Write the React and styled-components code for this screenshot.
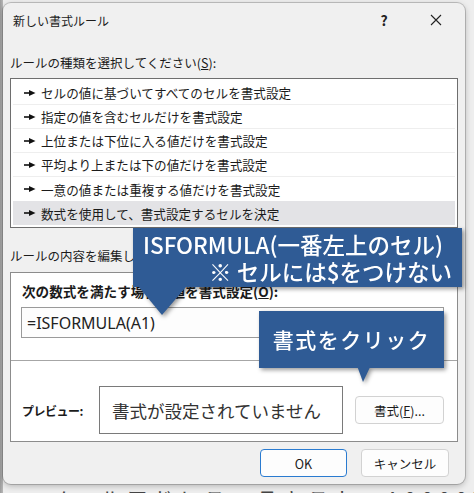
import React from "react";
import styled, { createGlobalStyle } from "styled-components";

const Global = createGlobalStyle`
  html, body { margin: 0; padding: 0; }
  body {
    background: #e4e4e4;
    font-family: "Noto Sans CJK JP", "Noto Sans", sans-serif;
    color: #1b1b1b;
  }
`;

const Page = styled.div`
  position: relative;
  width: 474px;
  height: 493px;
  overflow: hidden;
  padding: 3px 0 0 3px;
  box-sizing: border-box;
  background: linear-gradient(90deg, #9c9c9c 0, #b8b8b8 3px, #eeeeee 3px);
`;

const Dialog = styled.div`
  width: 462px;
  height: 481px;
  box-sizing: border-box;
  background: #f0f0f0;
  border-radius: 8px;
  box-shadow: 0 0 0 1px rgba(0, 0, 0, 0.18), 0 2px 6px rgba(0, 0, 0, 0.25);
  display: flex;
  flex-direction: column;
  padding: 0 7px 7px;
`;

const TitleBar = styled.div`
  height: 34px;
  display: flex;
  align-items: center;
  padding-left: 3px;
  padding-right: 15px;
  font-size: 12px;
`;

const TitleText = styled.span`
  flex: 1;
`;

const TitleButton = styled.span`
  width: 14px;
  margin-left: ${(p) => p.$ml || 0}px;
  display: flex;
  justify-content: center;
  align-items: center;
  font-size: 14px;
  font-weight: 600;
  color: #222;
`;

const Label = styled.div`
  height: 18px;
  line-height: 18px;
  font-size: ${(p) => (p.$bold ? 13.6 : 12.5)}px;
  margin-top: ${(p) => p.$mt || 0}px;
  padding-left: ${(p) => p.$pl || 0}px;
  font-weight: ${(p) => (p.$bold ? 700 : 400)};
  white-space: nowrap;
`;

const ListBox = styled.div`
  margin-top: 6px;
  height: 150px;
  box-sizing: border-box;
  border: 1px solid #6e6e6e;
  background: #ffffff;
  padding: 2px;
  display: flex;
  flex-direction: column;
`;

const Row = styled.div`
  height: 24px;
  flex: none;
  box-sizing: border-box;
  display: flex;
  align-items: center;
  gap: 5px;
  padding-left: 11px;
  font-size: 12.6px;
  background: ${(p) => (p.$selected ? "#e3e3e6" : "transparent")};
  border-bottom: ${(p) => (p.$last ? "none" : "1px solid #eeeeee")};
  white-space: nowrap;
`;

const GroupBox = styled.div`
  margin-top: 7px;
  border: 1px solid #8c8c8c;
  background: #ffffff;
  display: flex;
  flex-direction: column;
`;

const FormulaSection = styled.div`
  padding: 9px 13px 22px 10px;
  border-bottom: 1px solid #a6a6a6;
  display: flex;
  flex-direction: column;
`;

const FormulaInput = styled.div`
  margin-top: 7px;
  height: 31px;
  box-sizing: border-box;
  border: 1px solid #9a9a9a;
  background: #fdfdfd;
  display: flex;
  align-items: center;
  padding-left: 5px;
  font-family: "Noto Sans", "Noto Sans CJK JP", sans-serif;
  font-size: 16px;
  color: #222;
`;

const PreviewSection = styled.div`
  padding: 25px 13px 7px 11px;
  display: flex;
  align-items: center;
`;

const PreviewLabel = styled.div`
  width: 77px;
  font-size: 12px;
  font-weight: 700;
  letter-spacing: -0.5px;
`;

const PreviewBox = styled.div`
  width: 244px;
  height: 48px;
  box-sizing: border-box;
  border: 1px solid #7a7a7a;
  display: flex;
  align-items: center;
  padding-left: 12px;
  font-size: 17.5px;
  color: #333;
  white-space: nowrap;
`;

const Button = styled.button`
  width: ${(p) => p.$w}px;
  height: 28px;
  margin-left: ${(p) => p.$ml}px;
  box-sizing: border-box;
  border-radius: 4px;
  border: ${(p) => (p.$primary ? "1.5px solid #2a7bd0" : "1px solid #d2d2d2")};
  background: #fdfdfd;
  font-family: "Noto Sans CJK JP", "Noto Sans", sans-serif;
  font-size: 12.5px;
  color: #1b1b1b;
  padding: 0;
  display: flex;
  align-items: center;
  justify-content: center;
`;

const Footer = styled.div`
  margin-top: 7px;
  display: flex;
  justify-content: flex-end;
  padding-right: 9px;
`;

const BackdropText = styled.div`
  margin-top: 5px;
  padding-left: 46px;
  font-size: 20px;
  line-height: 20px;
  color: #444;
  letter-spacing: 6px;
  white-space: nowrap;
`;

const Callout = styled.div`
  position: absolute;
  left: ${(p) => p.$x}px;
  top: ${(p) => p.$y}px;
  width: ${(p) => p.$w}px;
  height: ${(p) => p.$h}px;
  filter: drop-shadow(2px 2px 2px rgba(0, 0, 0, 0.4));
`;

const CalloutBox = styled.div`
  position: relative;
  z-index: 1;
  height: 100%;
  box-sizing: border-box;
  background: #2f5b95;
  color: #ffffff;
  font-family: "Noto Sans CJK JP", sans-serif;
  font-weight: 500;
  font-size: ${(p) => p.$fs || 21}px;
  line-height: 27px;
  display: flex;
  flex-direction: column;
  justify-content: ${(p) => p.$justify || "flex-start"};
  align-items: ${(p) => p.$align || "stretch"};
  padding: ${(p) => p.$pad};
  letter-spacing: ${(p) => p.$ls || 0}px;
  white-space: nowrap;
`;

const CalloutLine = styled.div`
  text-align: ${(p) => p.$align};
`;

const Tail = styled.svg`
  position: absolute;
  left: ${(p) => p.$x}px;
  top: ${(p) => p.$y}px;
  overflow: visible;
`;

const Arrow = () => (
  <svg width="12" height="8" viewBox="0 0 12 8">
    <rect x="0" y="3.2" width="6" height="1.6" fill="#111" />
    <polygon points="5,1 11.5,4 5,7" fill="#111" />
  </svg>
);

const CloseIcon = () => (
  <svg width="12" height="12" viewBox="0 0 12 12">
    <path d="M1 1 L11 11 M11 1 L1 11" stroke="#222" strokeWidth="1.1" fill="none" />
  </svg>
);

const rules = [
  "セルの値に基づいてすべてのセルを書式設定",
  "指定の値を含むセルだけを書式設定",
  "上位または下位に入る値だけを書式設定",
  "平均より上または下の値だけを書式設定",
  "一意の値または重複する値だけを書式設定",
  "数式を使用して、書式設定するセルを決定",
];

export default function App() {
  return (
    <>
      <Global />
      <Page>
        <Dialog>
          <TitleBar>
            <TitleText>新しい書式ルール</TitleText>
            <TitleButton>?</TitleButton>
            <TitleButton $ml={38}>
              <CloseIcon />
            </TitleButton>
          </TitleBar>
          <Label $mt={17}>
            ルールの種類を選択してください(<u>S</u>):
          </Label>
          <ListBox>
            {rules.map((r, i) => (
              <Row key={r} $selected={i === rules.length - 1} $last={i >= rules.length - 2}>
                <Arrow />
                <span>{r}</span>
              </Row>
            ))}
          </ListBox>
          <Label $mt={19}>
            ルールの内容を編集してください(<u>E</u>):
          </Label>
          <GroupBox>
            <FormulaSection>
              <Label $bold $pl={1}>
                次の数式を満たす場合に値を書式設定(<u>O</u>):
              </Label>
              <FormulaInput>=ISFORMULA(A1)</FormulaInput>
            </FormulaSection>
            <PreviewSection>
              <PreviewLabel>プレビュー:</PreviewLabel>
              <PreviewBox>書式が設定されていません</PreviewBox>
              <Button $w={89} $ml={12}>
                書式(<u>F</u>)...
              </Button>
            </PreviewSection>
          </GroupBox>
          <Footer>
            <Button $w={87} $ml={0} $primary>
              OK
            </Button>
            <Button $w={88} $ml={14}>
              キャンセル
            </Button>
          </Footer>
        </Dialog>
        <BackdropText>メールアドレス　テキスト　A0000X</BackdropText>

        <Callout $x={133} $y={228} $w={329} $h={59}>
          <Tail $x={0} $y={52} width="60" height="36" viewBox="0 0 60 36">
            <polygon points="0,0 59,0 29,35" fill="#2f5b95" />
          </Tail>
          <CalloutBox $pad="3px 10px 2px 10px" $fs={22.5}>
            <CalloutLine $align="left">ISFORMULA(一番左上のセル)</CalloutLine>
            <CalloutLine $align="right">※ セルには$をつけない</CalloutLine>
          </CalloutBox>
        </Callout>

        <Callout $x={259} $y={311} $w={185} $h={57}>
          <Tail $x={97} $y={52} width="18" height="20" viewBox="0 0 18 20">
            <polygon points="0,0 16,0 7,19" fill="#2f5b95" />
          </Tail>
          <CalloutBox $pad="0" $justify="center" $align="center" $ls={1.5}>
            書式をクリック
          </CalloutBox>
        </Callout>
      </Page>
    </>
  );
}
